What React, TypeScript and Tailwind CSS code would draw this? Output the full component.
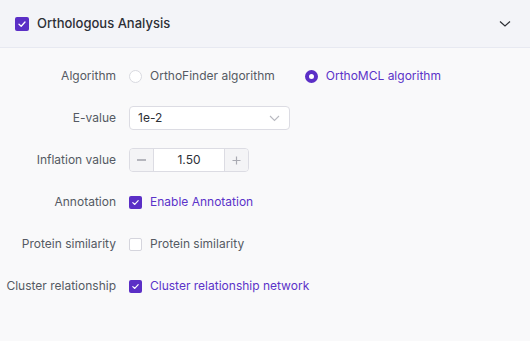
import React from "react";

const Check = ({ size = 13 }: { size?: number }) => (
  <span
    className="flex items-center justify-center rounded-[2px] bg-[#5b2fc6] shrink-0"
    style={{ width: size, height: size }}
  >
    <svg width={size - 4} height={size - 4} viewBox="0 0 10 10" fill="none">
      <path d="M2 5.2 L4.2 7.2 L8 3" stroke="white" strokeWidth="1.3" strokeLinecap="round" strokeLinejoin="round" />
    </svg>
  </span>
);

const Empty = () => (
  <span className="w-[13px] h-[13px] rounded-[2px] border border-[#d5d5dd] bg-white shrink-0" />
);

const Row = ({ label, children }: { label: string; children: React.ReactNode }) => (
  <div className="flex items-center h-[24px] gap-[13px]">
    <div className="w-[116px] text-right text-[12px] text-[#555a63] shrink-0">{label}</div>
    <div className="flex items-center">{children}</div>
  </div>
);

export default function App() {
  return (
    <div
      className="w-[530px] h-[341px] bg-[#f9f9fa] overflow-hidden"
      style={{ fontFamily: "Inter, 'Noto Sans', sans-serif" }}
    >
      <div className="h-[48px] bg-[#f3f4f8] border-b border-[#e7e9f1] flex items-center pl-[15px] pr-[19px]">
        <Check size={14} />
        <span className="ml-[8px] text-[13px] font-medium text-[#2c2f36]">Orthologous Analysis</span>
        <svg className="ml-auto" width="12" height="8" viewBox="0 0 12 8" fill="none">
          <path d="M1 1.5 L6 6 L11 1.5" stroke="#2b2d33" strokeWidth="1.2" />
        </svg>
      </div>
      <div className="pt-[16px] flex flex-col gap-[18px]">
        <Row label="Algorithm">
          <div className="flex items-center gap-[8px]">
            <span className="w-[13px] h-[13px] rounded-full border border-[#d9dae0] bg-white" />
            <span className="text-[12px] text-[#555a63]">OrthoFinder algorithm</span>
          </div>
          <div className="flex items-center gap-[8px] ml-[30px]">
            <span className="w-[13px] h-[13px] rounded-full border-[4px] border-[#5b2fc6] bg-white" />
            <span className="text-[12px] text-[#5b33c9]">OrthoMCL algorithm</span>
          </div>
        </Row>
        <Row label="E-value">
          <div className="w-[161px] h-[24px] bg-white border border-[#dcdce3] rounded-[4px] flex items-center pl-[8px] pr-[9px]">
            <span className="text-[12px] text-[#2c2f36]">1e-2</span>
            <svg className="ml-auto" width="11" height="7" viewBox="0 0 11 7" fill="none">
              <path d="M1 1 L5.5 5.5 L10 1" stroke="#b8b9c0" strokeWidth="1.1" />
            </svg>
          </div>
        </Row>
        <Row label="Inflation value">
          <div className="w-[120px] h-[24px] border border-[#dcdce3] rounded-[4px] flex overflow-hidden">
            <div className="w-[24px] bg-[#f4f4f6] flex items-center justify-center border-r border-[#dcdce3]">
              <span className="w-[9px] h-[1.5px] bg-[#b5b6bd]" />
            </div>
            <div className="flex-1 bg-white flex items-center justify-center text-[12px] text-[#2c2f36]">1.50</div>
            <div className="w-[24px] bg-[#f4f4f6] flex items-center justify-center border-l border-[#dcdce3]">
              <svg width="9" height="9" viewBox="0 0 9 9">
                <path d="M4.5 0.5 V8.5 M0.5 4.5 H8.5" stroke="#a9aab2" strokeWidth="1.2" />
              </svg>
            </div>
          </div>
        </Row>
        <Row label="Annotation">
          <div className="flex items-center gap-[8px]">
            <Check />
            <span className="text-[12px] text-[#5b33c9]">Enable Annotation</span>
          </div>
        </Row>
        <Row label="Protein similarity">
          <div className="flex items-center gap-[8px]">
            <Empty />
            <span className="text-[12px] text-[#555a63]">Protein similarity</span>
          </div>
        </Row>
        <Row label="Cluster relationship">
          <div className="flex items-center gap-[8px]">
            <Check />
            <span className="text-[12px] text-[#5b33c9]">Cluster relationship network</span>
          </div>
        </Row>
      </div>
    </div>
  );
}
